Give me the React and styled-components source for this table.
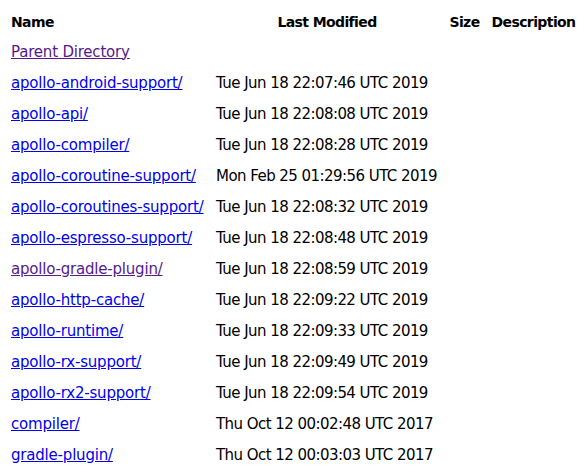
import React from "react";
import styled, { createGlobalStyle } from "styled-components";

const GlobalStyle = createGlobalStyle`
  body {
    margin: 8px;
    background: #fff;
    color: #000;
    font-family: "DejaVu Sans", Tahoma, sans-serif;
    font-size: 15px;
  }
`;

const Listing = styled.table`
  border-spacing: 2px;
  table-layout: fixed;
`;

const Head = styled.th`
  width: ${p => p.$w}px;
  box-sizing: border-box;
  padding: 4px 1px 0;
  height: 25px;
  vertical-align: top;
  text-align: ${p => (p.$left ? "left" : "center")};
  font-size: 14px;
  letter-spacing: -0.6px;
  font-weight: bold;
  white-space: nowrap;
`;

const Cell = styled.td`
  padding: 0 1px;
  height: 29px;
  font-size: 15px;
  letter-spacing: ${p => (p.$date ? "-0.55px" : "-0.2px")};
  white-space: nowrap;
`;

const Link = styled.a`
  color: ${p => (p.$visited ? "#551a8b" : "#0000ee")};
  text-decoration: underline;
`;

const entries = [
  { name: "apollo-android-support/", date: "Tue Jun 18 22:07:46 UTC 2019" },
  { name: "apollo-api/", date: "Tue Jun 18 22:08:08 UTC 2019" },
  { name: "apollo-compiler/", date: "Tue Jun 18 22:08:28 UTC 2019" },
  { name: "apollo-coroutine-support/", date: "Mon Feb 25 01:29:56 UTC 2019" },
  { name: "apollo-coroutines-support/", date: "Tue Jun 18 22:08:32 UTC 2019" },
  { name: "apollo-espresso-support/", date: "Tue Jun 18 22:08:48 UTC 2019" },
  { name: "apollo-gradle-plugin/", date: "Tue Jun 18 22:08:59 UTC 2019", visited: true },
  { name: "apollo-http-cache/", date: "Tue Jun 18 22:09:22 UTC 2019" },
  { name: "apollo-runtime/", date: "Tue Jun 18 22:09:33 UTC 2019" },
  { name: "apollo-rx-support/", date: "Tue Jun 18 22:09:49 UTC 2019" },
  { name: "apollo-rx2-support/", date: "Tue Jun 18 22:09:54 UTC 2019" },
  { name: "compiler/", date: "Thu Oct 12 00:02:48 UTC 2017" },
  { name: "gradle-plugin/", date: "Thu Oct 12 00:03:03 UTC 2017" },
];

const App = () => {
  return (
    <>
      <GlobalStyle />
      <Listing>
        <thead>
          <tr>
            <Head $w={203} $left>Name</Head>
            <Head $w={224}>Last Modified</Head>
            <Head $w={47}>Size</Head>
            <Head $w={87}>Description</Head>
          </tr>
        </thead>
        <tbody>
          <tr>
            <Cell colSpan={4}>
              <Link href="#" $visited>Parent Directory</Link>
            </Cell>
          </tr>
          {entries.map(e => (
            <tr key={e.name}>
              <Cell>
                <Link href="#" $visited={e.visited}>{e.name}</Link>
              </Cell>
              <Cell $date>{e.date}</Cell>
              <Cell></Cell>
              <Cell></Cell>
            </tr>
          ))}
        </tbody>
      </Listing>
    </>
  );
};

export default App;
